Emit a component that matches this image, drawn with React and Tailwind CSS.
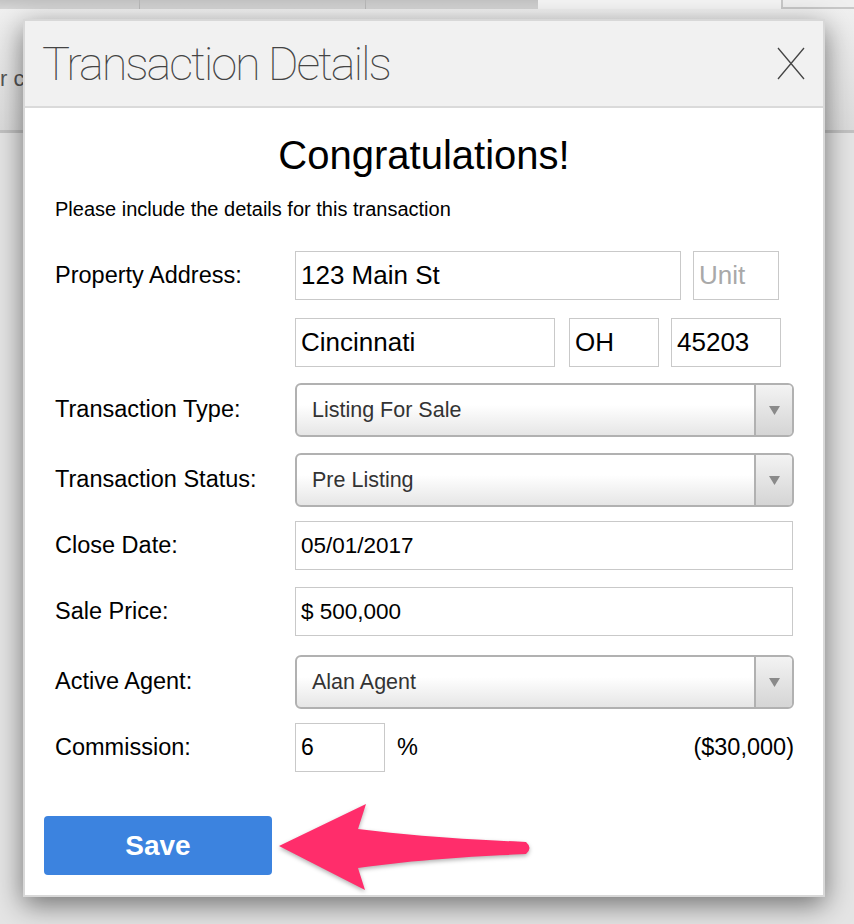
import React from 'react';

const FONT = { fontFamily: '"Liberation Sans", Arial, sans-serif' };

const Caret = () => (
  <svg width="11" height="9" viewBox="0 0 11 9">
    <polygon points="0,0 11,0 5.5,9" fill="#8a8a8a" />
  </svg>
);

const TextBox = ({ children, className = '', muted = false }) => (
  <div
    className={`h-[49px] border border-[#c9c9c9] bg-white flex items-center px-[5px] ${
      muted ? 'text-[#a9a9a9]' : 'text-black'
    } ${className}`}
  >
    {children}
  </div>
);

const SelectBox = ({ value }) => (
  <div className="h-[54px] w-[499px] rounded-[6px] border-2 border-[#b1b1b1] bg-gradient-to-b from-white from-40% to-[#e6e6e6] flex items-center overflow-hidden">
    <span className="flex-1 pl-[15px] text-[21.5px] text-[#333]">{value}</span>
    <div className="w-[38px] h-full border-l-2 border-[#b1b1b1] bg-gradient-to-b from-[#f3f3f3] to-[#d5d5d5] flex items-center justify-center">
      <Caret />
    </div>
  </div>
);

const Row = ({ label, children, className = '' }) => (
  <div className={`grid grid-cols-[240px_499px] items-center ${className}`}>
    <span className="text-[23.5px] text-black">{label}</span>
    <div className="flex items-center">{children}</div>
  </div>
);

const Arrow = () => (
  <svg
    className="absolute left-[272px] top-[798px] drop-shadow-[0_2px_2px_rgba(0,0,0,0.3)]"
    width="270"
    height="100"
    viewBox="272 798 270 100"
  >
    <path
      d="M279,846 L366,804 L358,829 C420,837 480,840 526,842 Q533,848 526,854 C480,856 420,859 358,868 L365,890 Z"
      fill="#ff2d6b"
    />
  </svg>
);

export default function App() {
  return (
    <div className="relative w-[854px] h-[924px] overflow-hidden bg-[#e5e5e5]" style={FONT}>
      {/* page behind the dialog */}
      <div className="absolute inset-x-0 top-0 h-[9px] flex bg-gradient-to-b from-[#c4c4c4] to-[#d6d6d6]">
        <div className="w-[139px]" />
        <div className="w-[226px] border-l border-[#b8b8b8]" />
        <div className="w-[173px] border-l border-[#b8b8b8]" />
        <div className="w-[243px] bg-[#f4f4f4]" />
        <div className="flex-1 border-l-2 border-b-2 border-[#c8c8c8] bg-[#efefef]" />
      </div>
      <div className="absolute inset-x-0 top-[9px] h-[121px] bg-gradient-to-b from-[#f0f0f0] to-[#dcdcdc]" />
      <span className="absolute left-0 top-[62px] text-[22px] text-[#555]">r c</span>
      <div className="absolute inset-x-0 top-[130px] h-[3px] bg-[#c2c2c2]" />

      {/* dialog */}
      <div className="absolute left-[23px] top-[19px] w-[802px] border-2 border-[#d8d8d8] bg-white shadow-[0_8px_26px_rgba(0,0,0,0.5)]">
        <div className="h-[87px] bg-[#f1f1f1] border-b-2 border-[#dadada] flex items-center justify-between pl-[17px] pr-[18px]">
          <h2
            className="text-[47px] font-thin text-[#444] tracking-[-0.045em] leading-none"
            style={{ fontFamily: 'Roboto, "Liberation Sans", sans-serif' }}
          >
            Transaction Details
          </h2>
          <svg width="28" height="33" viewBox="0 0 28 33">
            <path d="M1,1 L27,32 M27,1 L1,32" stroke="#444" strokeWidth="1.3" fill="none" />
          </svg>
        </div>

        <div className="px-[30px] pb-[20px] flex flex-col">
          <h1 className="mt-[27px] text-center text-[40px] leading-none text-black">Congratulations!</h1>
          <p className="mt-[24px] text-[20px] leading-none text-black">
            Please include the details for this transaction
          </p>

          <Row label="Property Address:" className="mt-[32px]">
            <TextBox className="w-[386px] text-[26px]">123 Main St</TextBox>
            <TextBox className="w-[86px] ml-[12px] text-[26px]" muted>Unit</TextBox>
          </Row>
          <div className="mt-[18px] ml-[240px] flex">
            <TextBox className="w-[260px] text-[26px]">Cincinnati</TextBox>
            <TextBox className="w-[90px] ml-[14px] text-[26px]">OH</TextBox>
            <TextBox className="w-[110px] ml-[12px] text-[26px]">45203</TextBox>
          </div>

          <Row label="Transaction Type:" className="mt-[16px]">
            <SelectBox value="Listing For Sale" />
          </Row>
          <Row label="Transaction Status:" className="mt-[16px]">
            <SelectBox value="Pre Listing" />
          </Row>
          <Row label="Close Date:" className="mt-[14px]">
            <TextBox className="w-[498px] text-[22.5px]">05/01/2017</TextBox>
          </Row>
          <Row label="Sale Price:" className="mt-[17px]">
            <TextBox className="w-[498px] text-[22.5px]">$ 500,000</TextBox>
          </Row>
          <Row label="Active Agent:" className="mt-[19px]">
            <SelectBox value="Alan Agent" />
          </Row>
          <Row label="Commission:" className="mt-[14px]">
            <TextBox className="w-[90px] text-[23px]">6</TextBox>
            <span className="ml-[12px] text-[23.5px] text-black">%</span>
            <span className="ml-auto text-[23.5px] text-black">($30,000)</span>
          </Row>

          <button className="mt-[44px] ml-[-11px] w-[228px] h-[59px] rounded-[4px] bg-[#3c83df] text-white text-[28px] font-bold">
            Save
          </button>
        </div>
      </div>

      <Arrow />
    </div>
  );
}
